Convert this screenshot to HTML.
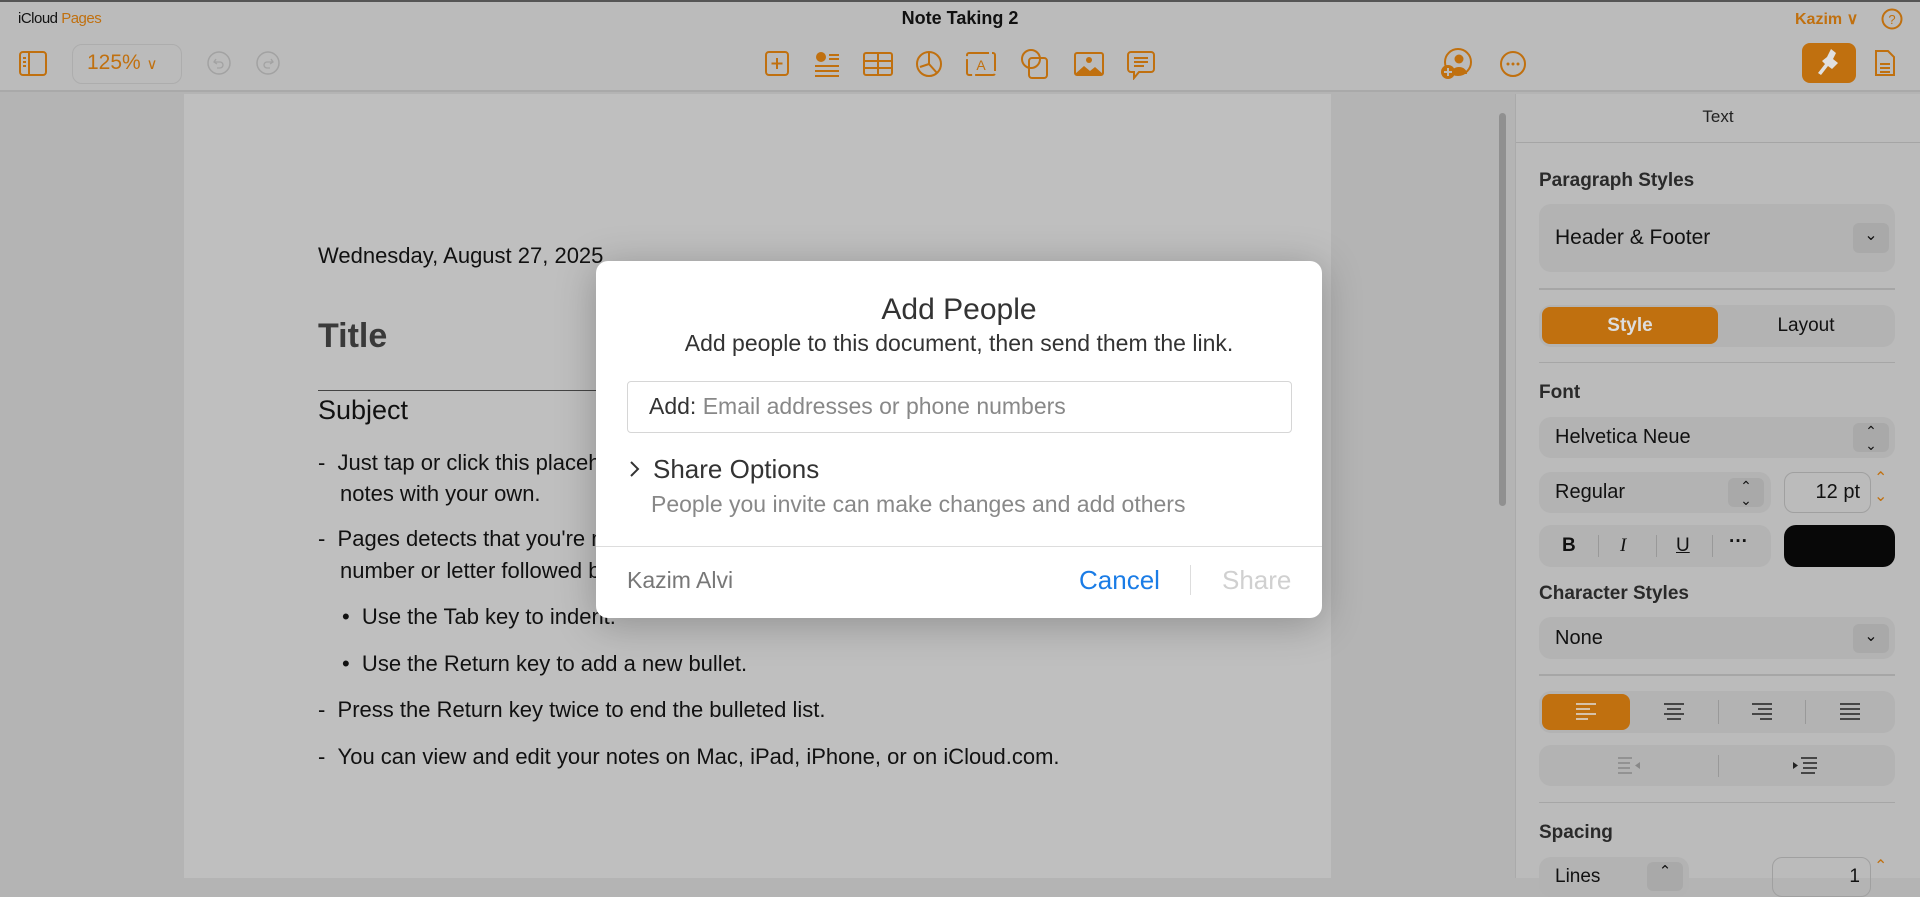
<!DOCTYPE html>
<html><head><meta charset="utf-8"><style>
*{margin:0;padding:0;box-sizing:border-box}
body{width:1920px;height:878px;overflow:hidden;background:#b4b4b4;font-family:"Liberation Sans",Arial,sans-serif;position:relative;color:#111}
.a{position:absolute}
.o{color:#c0700f}
.sb{background:#b3b3b3;border-radius:12px}
.lbl{font-weight:bold;font-size:19px;color:#2a2a2a;left:1539px}
.sep{left:1539px;width:356px;height:2px;background:#a6a6a6}
.dt{font-size:22px;color:#111;white-space:nowrap}
.ic{stroke:#c0700f;fill:none;stroke-width:2}
</style></head><body>
<div class="a" style="left:0;top:0;width:1920px;height:92px;background:#bbbbbb;border-bottom:2px solid #a9a9a9"></div>
<div class="a" style="left:0;top:0;width:1920px;height:2px;background:#555"></div>
<div class="a" style="left:18px;top:10px;font-size:15px;letter-spacing:-0.5px">iCloud <span class="o">Pages</span></div>
<div class="a" style="left:0;width:1920px;top:8px;text-align:center;font-size:18px;font-weight:bold;color:#111">Note Taking 2</div>
<div class="a o" style="left:1795px;top:9px;font-size:16px;font-weight:bold">Kazim ∨</div>
<svg class="a" style="left:1881px;top:8px" width="22" height="22"><circle cx="11" cy="11" r="9.5" class="ic" stroke-width="1.6"/><text x="11" y="16" text-anchor="middle" font-size="13" fill="#c0700f" font-family="Liberation Sans">?</text></svg>
<!-- toolbar -->
<svg class="a" style="left:19px;top:51px" width="28" height="26"><rect x="1" y="1" width="26" height="23" rx="3" class="ic"/><line x1="10" y1="1" x2="10" y2="24" class="ic"/><path d="M4 7h3M4 11h3M4 15h3" class="ic" stroke-width="1.2"/></svg>
<div class="a" style="left:72px;top:44px;width:110px;height:40px;border:1px solid #adadad;border-radius:10px"></div>
<div class="a o" style="left:87px;top:51px;font-size:21px">125% <span style="font-size:15px">∨</span></div>
<svg class="a" style="left:206px;top:50px" width="26" height="26"><circle cx="13" cy="13" r="11" stroke="#a2a2a2" fill="none" stroke-width="1.5"/><path d="M10 9l-2 3 3 2M8 12h6a3 3 0 0 1 0 6h-3" stroke="#a2a2a2" fill="none" stroke-width="1.3"/></svg>
<svg class="a" style="left:255px;top:50px" width="26" height="26"><circle cx="13" cy="13" r="11" stroke="#a2a2a2" fill="none" stroke-width="1.5"/><path d="M16 9l2 3-3 2M18 12h-6a3 3 0 0 0 0 6h3" stroke="#a2a2a2" fill="none" stroke-width="1.3"/></svg>
<svg class="a" style="left:765px;top:51px" width="24" height="26"><rect x="1" y="1" width="22" height="23" rx="3" class="ic"/><path d="M12 7v11M6.5 12.5h11" class="ic" stroke-width="1.5"/></svg>
<svg class="a" style="left:813px;top:50px" width="28" height="28"><circle cx="8" cy="7" r="5" fill="#c0700f"/><path d="M16 5h10M16 9h10M2 16h24M2 21h24M2 26h24" class="ic" stroke-width="1.8"/></svg>
<svg class="a" style="left:863px;top:52px" width="30" height="24"><rect x="1" y="1" width="28" height="22" rx="2" class="ic"/><path d="M1 9h28M1 16h28M15 1v22" class="ic"/></svg>
<svg class="a" style="left:915px;top:50px" width="28" height="28"><circle cx="14" cy="14" r="12" class="ic"/><path d="M14 2v12l8 9M14 14l-9 3" class="ic"/></svg>
<svg class="a" style="left:966px;top:52px" width="30" height="24"><rect x="1" y="1" width="28" height="22" rx="2" class="ic" stroke-dasharray="20 3"/><text x="15" y="18" text-anchor="middle" font-size="14" fill="#c0700f" font-family="Liberation Sans">A</text></svg>
<svg class="a" style="left:1020px;top:48px" width="30" height="32"><circle cx="11" cy="11" r="9" class="ic"/><rect x="9" y="10" width="18" height="20" rx="3" fill="#bbb" class="ic"/></svg>
<svg class="a" style="left:1074px;top:52px" width="30" height="24"><rect x="1" y="1" width="28" height="22" rx="2" class="ic"/><circle cx="15" cy="8" r="3" fill="#c0700f"/><path d="M1 22l9-8 6 5 5-4 8 7z" fill="#c0700f"/></svg>
<svg class="a" style="left:1127px;top:50px" width="28" height="30"><path d="M4 2h20a3 3 0 0 1 3 3v14a3 3 0 0 1-3 3H12l-5 6v-6H4a3 3 0 0 1-3-3V5a3 3 0 0 1 3-3z" class="ic"/><path d="M7 8h14M7 12h14M7 16h10" class="ic" stroke-width="1.4"/></svg>
<svg class="a" style="left:1440px;top:48px" width="32" height="32"><circle cx="18" cy="14" r="13" class="ic"/><circle cx="19" cy="11" r="4.5" fill="#c0700f"/><path d="M11 26a8 7 0 0 1 16 0z" fill="#c0700f"/><circle cx="8" cy="24" r="7" fill="#c0700f"/><path d="M8 20v8M4 24h8" stroke="#bbb" stroke-width="2"/></svg>
<svg class="a" style="left:1499px;top:50px" width="28" height="28"><circle cx="14" cy="14" r="12" class="ic"/><circle cx="9" cy="14" r="1.5" fill="#c0700f"/><circle cx="14" cy="14" r="1.5" fill="#c0700f"/><circle cx="19" cy="14" r="1.5" fill="#c0700f"/></svg>
<div class="a" style="left:1802px;top:43px;width:54px;height:40px;background:#c0700f;border-radius:8px"></div>
<svg class="a" style="left:1815px;top:47px" width="28" height="32"><path d="M16 2l5 4-3 6 5 4-6 6-4-3-7 9-3-2 7-9-3-3 5-4z" fill="#e0e0e0"/></svg>
<svg class="a" style="left:1874px;top:49px" width="22" height="28"><path d="M2 2h12l6 6v18H2z" class="ic" stroke-width="1.6"/><path d="M6 15h10M6 19h10M6 23h10" class="ic" stroke-width="1.4"/></svg>
<!-- document -->
<div class="a" style="left:184px;top:94px;width:1147px;height:784px;background:#bfbfbf"></div>
<div class="a" style="left:1499px;top:113px;width:7px;height:393px;background:#909090;border-radius:4px"></div>
<div class="a dt" style="left:318px;top:243px">Wednesday, August 27, 2025</div>
<div class="a" style="left:318px;top:317px;font-size:34px;font-weight:bold;color:#3a3a3a">Title</div>
<div class="a" style="left:318px;top:390px;width:900px;height:1px;background:#444"></div>
<div class="a" style="left:318px;top:395px;font-size:27px;color:#111">Subject</div>
<div class="a dt" style="left:318px;top:450px">-&nbsp;&nbsp;Just tap or click this placeholder text and replace the sample</div>
<div class="a dt" style="left:340px;top:481px">notes with your own.</div>
<div class="a dt" style="left:318px;top:526px">-&nbsp;&nbsp;Pages detects that you're making a list when you start with a</div>
<div class="a dt" style="left:340px;top:558px">number or letter followed by a period.</div>
<div class="a dt" style="left:342px;top:604px">•&nbsp;&nbsp;Use the Tab key to indent.</div>
<div class="a dt" style="left:342px;top:651px">•&nbsp;&nbsp;Use the Return key to add a new bullet.</div>
<div class="a dt" style="left:318px;top:697px">-&nbsp;&nbsp;Press the Return key twice to end the bulleted list.</div>
<div class="a dt" style="left:318px;top:744px">-&nbsp;&nbsp;You can view and edit your notes on Mac, iPad, iPhone, or on iCloud.com.</div>
<!-- sidebar -->
<div class="a" style="left:1515px;top:94px;width:405px;height:784px;background:#bbbbbb;border-left:1px solid #aaa"></div>
<div class="a" style="left:1516px;top:142px;width:404px;height:1px;background:#a5a5a5"></div>
<div class="a" style="left:1516px;width:404px;top:107px;text-align:center;font-size:17px;color:#222">Text</div>
<div class="a lbl" style="top:170px">Paragraph Styles</div>
<div class="a sb" style="left:1539px;top:204px;width:356px;height:68px"></div>
<div class="a" style="left:1555px;top:226px;font-size:21px">Header &amp; Footer</div>
<div class="a" style="left:1853px;top:223px;width:36px;height:30px;background:#a9a9a9;border-radius:6px;text-align:center;font-size:16px;line-height:26px">⌄</div>
<div class="a sep" style="top:288px"></div>
<div class="a sb" style="left:1539px;top:305px;width:356px;height:42px"></div>
<div class="a" style="left:1542px;top:307px;width:176px;height:37px;background:#c0700f;border-radius:8px;color:#ddd;font-weight:bold;font-size:19px;text-align:center;line-height:37px">Style</div>
<div class="a" style="left:1718px;top:307px;width:176px;text-align:center;line-height:37px;font-size:19px">Layout</div>
<div class="a sep" style="top:362px;height:1px"></div>
<div class="a lbl" style="top:382px">Font</div>
<div class="a sb" style="left:1539px;top:417px;width:356px;height:41px"></div>
<div class="a" style="left:1555px;top:426px;font-size:20px">Helvetica Neue</div>
<div class="a" style="left:1853px;top:423px;width:36px;height:29px;background:#a9a9a9;border-radius:6px;text-align:center;font-size:14px;line-height:14px;padding-top:1px">⌃<br>⌄</div>
<div class="a sb" style="left:1539px;top:472px;width:232px;height:41px"></div>
<div class="a" style="left:1555px;top:481px;font-size:20px">Regular</div>
<div class="a" style="left:1728px;top:478px;width:36px;height:29px;background:#a9a9a9;border-radius:6px;text-align:center;font-size:14px;line-height:14px;padding-top:1px">⌃<br>⌄</div>
<div class="a" style="left:1784px;top:472px;width:87px;height:41px;border:1px solid #a0a0a0;border-radius:10px;text-align:right;padding-right:10px;font-size:20px;line-height:39px">12 pt</div>
<div class="a o" style="left:1874px;top:470px;font-size:16px;line-height:18px">⌃<br>⌄</div>
<div class="a sb" style="left:1539px;top:525px;width:232px;height:42px"></div>
<div class="a" style="left:1562px;top:535px;font-size:19px;font-weight:bold">B</div>
<div class="a" style="left:1620px;top:535px;font-size:19px;font-family:'Liberation Serif',serif;font-style:italic">I</div>
<div class="a" style="left:1676px;top:535px;font-size:19px;text-decoration:underline">U</div>
<div class="a" style="left:1729px;top:531px;font-size:19px;font-weight:bold">···</div>
<div class="a" style="left:1598px;top:535px;width:1px;height:22px;background:#999"></div>
<div class="a" style="left:1656px;top:535px;width:1px;height:22px;background:#999"></div>
<div class="a" style="left:1712px;top:535px;width:1px;height:22px;background:#999"></div>
<div class="a" style="left:1784px;top:525px;width:111px;height:42px;background:#080808;border-radius:12px"></div>
<div class="a lbl" style="top:583px">Character Styles</div>
<div class="a sb" style="left:1539px;top:617px;width:356px;height:42px"></div>
<div class="a" style="left:1555px;top:627px;font-size:20px">None</div>
<div class="a" style="left:1853px;top:624px;width:36px;height:29px;background:#a9a9a9;border-radius:6px;text-align:center;font-size:16px;line-height:25px">⌄</div>
<div class="a sep" style="top:674px"></div>
<div class="a sb" style="left:1539px;top:691px;width:356px;height:42px"></div>
<div class="a" style="left:1542px;top:694px;width:88px;height:36px;background:#c0700f;border-radius:8px"></div>
<svg class="a" style="left:1576px;top:703px" width="20" height="17"><path d="M0 1h20M0 6h14M0 11h20M0 16h12" stroke="#ddd" stroke-width="1.6"/></svg>
<svg class="a" style="left:1664px;top:703px" width="20" height="17"><path d="M0 1h20M3 6h14M0 11h20M3 16h14" stroke="#222" stroke-width="1.6"/></svg>
<svg class="a" style="left:1752px;top:703px" width="20" height="17"><path d="M0 1h20M6 6h14M0 11h20M8 16h12" stroke="#222" stroke-width="1.6"/></svg>
<svg class="a" style="left:1840px;top:703px" width="20" height="17"><path d="M0 1h20M0 6h20M0 11h20M0 16h20" stroke="#222" stroke-width="1.6"/></svg>
<div class="a" style="left:1718px;top:700px;width:1px;height:24px;background:#999"></div>
<div class="a" style="left:1805px;top:700px;width:1px;height:24px;background:#999"></div>
<div class="a sb" style="left:1539px;top:745px;width:356px;height:41px"></div>
<svg class="a" style="left:1618px;top:757px" width="24" height="17"><path d="M0 1h14M0 6h12M0 11h12M0 16h14" stroke="#888" stroke-width="1.4"/><path d="M22 5l-5 3.5 5 3.5z" fill="#888"/></svg>
<svg class="a" style="left:1793px;top:757px" width="24" height="17"><path d="M8 1h16M10 6h14M10 11h14M8 16h14" stroke="#222" stroke-width="1.4"/><path d="M0 5l5 3.5-5 3.5z" fill="#222"/></svg>
<div class="a" style="left:1718px;top:755px;width:1px;height:22px;background:#999"></div>
<div class="a sep" style="top:802px;height:1px"></div>
<div class="a lbl" style="top:822px">Spacing</div>
<div class="a sb" style="left:1539px;top:857px;width:150px;height:40px"></div>
<div class="a" style="left:1555px;top:866px;font-size:19px">Lines</div>
<div class="a" style="left:1647px;top:862px;width:36px;height:29px;background:#a9a9a9;border-radius:6px;text-align:center;font-size:15px">⌃</div>
<div class="a" style="left:1772px;top:857px;width:99px;height:40px;border:1px solid #a0a0a0;border-radius:10px;text-align:right;padding-right:10px;font-size:19px;line-height:38px">1</div>
<div class="a o" style="left:1874px;top:856px;font-size:16px">⌃</div>
<!-- dialog -->
<div class="a" style="left:596px;top:261px;width:726px;height:357px;background:#fff;border-radius:12px;box-shadow:0 6px 40px rgba(0,0,0,0.25)"></div>
<div class="a" style="left:596px;width:726px;top:293px;text-align:center;font-size:30px;color:#333">Add People</div>
<div class="a" style="left:596px;width:726px;top:330px;text-align:center;font-size:23px;color:#333">Add people to this document, then send them the link.</div>
<div class="a" style="left:627px;top:381px;width:665px;height:52px;border:1px solid #d6d6d6;border-radius:4px"></div>
<div class="a" style="left:649px;top:393px;font-size:23px;color:#333">Add: <span style="color:#888">Email addresses or phone numbers</span></div>
<svg class="a" style="left:629px;top:460px" width="12" height="18"><path d="M2 2l7 7-7 7" stroke="#333" fill="none" stroke-width="2"/></svg>
<div class="a" style="left:653px;top:454px;font-size:26px;color:#333">Share Options</div>
<div class="a" style="left:651px;top:491px;font-size:23px;color:#888">People you invite can make changes and add others</div>
<div class="a" style="left:596px;top:546px;width:726px;height:1px;background:#ddd"></div>
<div class="a" style="left:627px;top:567px;font-size:23px;color:#777">Kazim Alvi</div>
<div class="a" style="left:1079px;top:565px;font-size:26px;color:#1a7ce6">Cancel</div>
<div class="a" style="left:1190px;top:565px;width:1px;height:30px;background:#ddd"></div>
<div class="a" style="left:1222px;top:565px;font-size:26px;color:#d0d0d0">Share</div>
</body></html>
